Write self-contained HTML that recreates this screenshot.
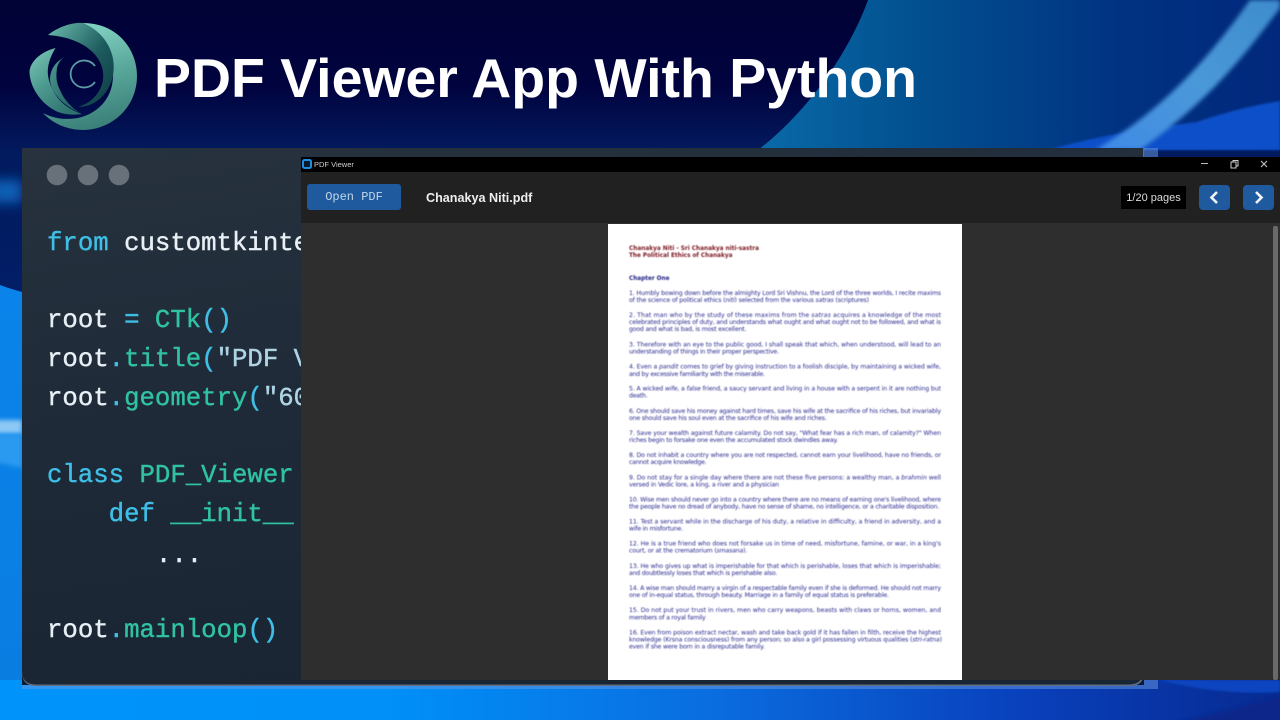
<!DOCTYPE html>
<html><head><meta charset="utf-8"><style>
html,body{margin:0;padding:0;width:1280px;height:720px;overflow:hidden;background:#021a5e}
.abs{position:absolute}
#code{left:47px;top:0;font-family:"Liberation Mono",monospace;font-size:25.7px;color:#e8f0f6;white-space:pre;position:absolute;-webkit-text-stroke:.4px currentColor}
#code div{position:absolute;left:0;line-height:30px;height:30px}
.k{color:#3fbfe6}.g{color:#30c2a2}.s{color:#aed4e4}
text{font-family:"DejaVu Sans",sans-serif}
</style></head><body>
<svg class="abs" style="left:0;top:0" width="1280" height="720" viewBox="0 0 1280 720">
<defs>
<linearGradient id="bg" x1="0" y1="0" x2="0" y2="1"><stop offset="0" stop-color="#010235"/><stop offset=".12" stop-color="#01033f"/><stop offset=".21" stop-color="#021a5e"/><stop offset="1" stop-color="#022a80"/></linearGradient>
<linearGradient id="sw" x1="0" y1="0" x2="1" y2="0"><stop offset="0" stop-color="#0a6aa8"/><stop offset=".3" stop-color="#02508f"/><stop offset=".7" stop-color="#013282"/><stop offset="1" stop-color="#01287c"/></linearGradient>
<linearGradient id="bot" x1="0" y1="0" x2="1" y2="0"><stop offset="0" stop-color="#0094fa"/><stop offset=".3" stop-color="#0090f8"/><stop offset=".55" stop-color="#0a6ee0"/><stop offset=".8" stop-color="#0940bc"/><stop offset="1" stop-color="#072a90"/></linearGradient>
<linearGradient id="st" x1="0" y1="1" x2="1" y2="0"><stop offset="0" stop-color="#3f8ae6"/><stop offset=".5" stop-color="#4a98d8"/><stop offset="1" stop-color="#3e8ccc"/></linearGradient>
<linearGradient id="lf" x1="0" y1="0" x2="0" y2="1"><stop offset="0" stop-color="#0a84ea"/><stop offset="1" stop-color="#0a7ce0"/></linearGradient>
<linearGradient id="lg1" x1=".3" y1="0" x2=".5" y2="1"><stop offset="0" stop-color="#86d6c6"/><stop offset=".5" stop-color="#5aa89c"/><stop offset="1" stop-color="#3a7f78"/></linearGradient>
<linearGradient id="lg2" x1="0" y1="0" x2=".7" y2="1"><stop offset="0" stop-color="#7cc8b8"/><stop offset=".5" stop-color="#4d9a90"/><stop offset="1" stop-color="#2f726e"/></linearGradient>
<linearGradient id="lg3" x1="0" y1="0" x2="1" y2="1"><stop offset="0" stop-color="#4f9a90"/><stop offset="1" stop-color="#17555a"/></linearGradient>
<linearGradient id="lg4" x1="0" y1="0" x2="1" y2="1"><stop offset="0" stop-color="#6cbcae"/><stop offset=".55" stop-color="#1d5c5e"/><stop offset="1" stop-color="#0c3a44"/></linearGradient>
<linearGradient id="panel" x1="0" y1="0" x2=".3" y2="1"><stop offset="0" stop-color="#27323e"/><stop offset=".5" stop-color="#1e2a38"/><stop offset="1" stop-color="#1a2534"/></linearGradient>
<filter id="b3" x="-30%" y="-30%" width="160%" height="160%"><feGaussianBlur stdDeviation="2"/></filter>
<filter id="b6" x="-50%" y="-50%" width="200%" height="200%"><feGaussianBlur stdDeviation="6"/></filter>
<filter id="b1" x="-30%" y="-30%" width="160%" height="160%"><feGaussianBlur stdDeviation="1"/></filter>
</defs>
<rect width="1280" height="720" fill="url(#bg)"/>
<!-- top right swoosh -->
<path d="M868 0 C850 50 810 110 758 150 L1280 150 L1280 0 Z" fill="url(#sw)"/>
<path d="M1048 150 C1100 135 1150 128 1197 122 C1225 112 1255 105 1280 101 L1280 150 Z" fill="#0b50c8" filter="url(#b1)"/>
<path d="M1095 150 C1160 112 1208 60 1250 0 L1280 0 L1280 8 C1245 55 1210 100 1140 150 Z" fill="url(#st)" filter="url(#b3)"/>
<!-- left strip -->
<path d="M-10 180 H22 V203 H-10 Z" fill="#0a60b8" filter="url(#b6)"/>
<path d="M0 285 C8 288 15 290 22 292 V720 H0 Z" fill="url(#lf)"/>
<path d="M-5 420 H22 V434 H-5 Z" fill="#8cc8f4" filter="url(#b3)"/>
<path d="M-5 434 H22 V468 L-5 462 Z" fill="#2a9af0" filter="url(#b3)"/>
<!-- bottom -->
<rect x="0" y="680" width="1280" height="40" fill="url(#bot)"/>
<path d="M1158 680 L1280 680 L1280 692 C1240 695 1200 690 1158 680 Z" fill="#0a44c0" filter="url(#b1)"/>
<path d="M1170 725 L1290 695 L1290 725 Z" fill="#07268a" filter="url(#b3)"/>
<!-- translucent backing -->
<rect x="22" y="148" width="1136" height="541" fill="#6a9ae0" opacity=".5"/>
<rect x="22" y="148" width="1122" height="537" fill="#0a1a30"/>
<path d="M22 148 H1144 V672 Q1144 686 1130 686 H36 Q22 686 22 672 Z" fill="#5f6e84"/>
<path d="M22 148 H1143 V671 Q1143 684.500 1129 684.500 H36 Q22 684.500 22 671 Z" fill="url(#panel)"/>
<!-- dots -->
<circle cx="57" cy="175" r="10.300" fill="#687079"/><circle cx="88" cy="175" r="10.300" fill="#687079"/><circle cx="119" cy="175" r="10.300" fill="#687079"/>
<!-- logo -->
<path d="M83 23 C118 23 137 50 137 76 C137 107 112 130 83 130 C68 130 53 124 43 113 C55 119 65 120 78 118 C96 114 113 100 113 75 C113 50 95 30 83 23 Z" fill="url(#lg1)"/>
<path d="M48 35 C58 27 72 22 83 23 C105 32 119 55 112 80 C106 98 92 107 78 107 C92 103 101 92 103 80 C106 60 88 38 48 35 Z" fill="url(#lg4)"/>
<path d="M55.500 48 C40 52 30 62 29.500 72 C30 90 44 106 58 112 C66 115 75 115 82 114 C70 110 60 103 54 92 C49 83 47 75 48 68 C49 60 52 54 55.500 48 Z" fill="url(#lg2)"/>
<path d="M64 57.500 C55 62 50 70 50 80 C51 92 62 105 80 113 C72 108 64 100 60 90 C56 82 56 76 57 68 C58 64 60 60 64 57.500 Z" fill="url(#lg3)"/>
<path d="M95 66 A13.500 13.500 0 1 0 95 82" fill="none" stroke="#5c9ca6" stroke-width="1.800"/>
<!-- title -->
<text x="154" y="97" textLength="763" lengthAdjust="spacingAndGlyphs" style="font-family:'Liberation Sans',sans-serif;font-weight:700;font-size:54.500px" fill="#fff">PDF Viewer App With Python</text>
</svg>

<div id="code">
<div style="top:229px"><span class="k">from</span> customtkinte</div>
<div style="top:306px">root <span class="k">=</span> <span class="g">CTk</span><span class="k">()</span></div>
<div style="top:345px">root<span class="k">.</span><span class="g">title</span><span class="k">(</span><span class="s">"PDF V</span></div>
<div style="top:384px">root<span class="k">.</span><span class="g">geometry</span><span class="k">(</span><span class="s">"60</span></div>
<div style="top:461px"><span class="k">class</span> <span class="g">PDF_Viewer</span></div>
<div style="top:500px">    <span class="k">def</span> <span class="g">__init__</span></div>
<div style="top:541px;left:1px">       ...</div>
<div style="top:616px">root<span class="k">.</span><span class="g">mainloop</span><span class="k">()</span></div>
</div>

<!-- PDF window -->
<div class="abs" style="left:301px;top:157px;width:979px;height:15px;background:#000"></div>
<div class="abs" style="left:301px;top:172px;width:979px;height:51px;background:#212121"></div>
<div class="abs" style="left:301px;top:223px;width:979px;height:457px;background:#2e2e2e"></div>
<div class="abs" style="left:302px;top:159px;width:5.500px;height:5.500px;border:2.500px solid #1e8fe0;border-radius:2.500px;background:#0a1a2a"></div>
<div class="abs" style="left:314px;top:158px;font:7.500px/13px 'Liberation Sans',sans-serif;color:#d0d0d0">PDF Viewer</div>
<svg class="abs" style="left:1195px;top:157px" width="85" height="15" viewBox="0 0 85 15">
<path d="M6 6.500H13" stroke="#bbb" stroke-width="1"/>
<rect x="36" y="5" width="5" height="6" fill="none" stroke="#ccc" stroke-width="1"/><path d="M38 5V3.500H43V9H41" fill="none" stroke="#ccc" stroke-width="1"/>
<path d="M66 4L72 10M72 4L66 10" stroke="#ccc" stroke-width="1"/>
</svg>
<div class="abs" style="left:307px;top:184px;width:94px;height:26px;background:#1f5a9e;border-radius:3px;font:12px/26px 'Liberation Mono',monospace;color:#c0d6ea;text-align:center">Open PDF</div>
<div class="abs" style="left:426px;top:190px;font:bold 12.600px/17px 'Liberation Sans',sans-serif;color:#eee;width:120px;white-space:nowrap">Chanakya Niti.pdf</div>
<div class="abs" style="left:1121px;top:186px;width:65px;height:23px;background:#000;font:11px/24px 'Liberation Sans',sans-serif;color:#ddd;text-align:center;white-space:nowrap">1/20 pages</div>
<div class="abs" style="left:1199px;top:185px;width:31px;height:25px;background:#1f5a9e;border-radius:4px"></div>
<div class="abs" style="left:1243px;top:185px;width:31px;height:25px;background:#1f5a9e;border-radius:4px"></div>
<svg class="abs" style="left:1199px;top:185px" width="75" height="25" viewBox="0 0 75 25">
<path d="M18 7L12.500 12.500L18 18" fill="none" stroke="#f2f6fa" stroke-width="2.600"/>
<path d="M57 7L62.500 12.500L57 18" fill="none" stroke="#f2f6fa" stroke-width="2.600"/>
</svg>
<div class="abs" style="left:1273px;top:226px;width:5px;height:454px;background:#6a6a6a;border-radius:2px"></div>
<div class="abs" style="left:608px;top:224px;width:354px;height:456px;background:#fff"></div>

<svg class="abs" style="left:0;top:0;filter:blur(.4px)" width="1280" height="720" viewBox="0 0 1280 720">
<g font-size="6.300" fill="#7a1520" font-weight="bold">
<text x="629" y="250" textLength="130" lengthAdjust="spacingAndGlyphs">Chanakya Niti - Sri Chanakya niti-sastra</text>
<text x="629" y="257" textLength="103.500" lengthAdjust="spacingAndGlyphs">The Political Ethics of Chanakya</text>
</g>
<text x="629" y="280" textLength="40.500" lengthAdjust="spacingAndGlyphs" font-size="6.300" font-weight="bold" fill="#1c1c80">Chapter One</text>
<g font-size="6.200" fill="#2a2a90">
<text x="629" y="295" textLength="312">1. Humbly bowing down before the almighty Lord Sri Vishnu, the Lord of the three worlds, I recite maxims</text>
<text x="629" y="302" textLength="240">of the science of political ethics (<tspan font-style="italic">niti</tspan>) selected from the various <tspan font-style="italic">satras</tspan> (scriptures)</text>
<text x="629" y="317" textLength="312">2. That man who by the study of these maxims from the <tspan font-style="italic">satras</tspan> acquires a knowledge of the most</text>
<text x="629" y="324" textLength="312">celebrated principles of duty, and understands what ought and what ought not to be followed, and what is</text>
<text x="629" y="331" textLength="117.500">good and what is bad, is most excellent.</text>
<text x="629" y="346.500" textLength="312">3. Therefore with an eye to the public good, I shall speak that which, when understood, will lead to an</text>
<text x="629" y="353.500" textLength="150">understanding of things in their proper perspective.</text>
<text x="629" y="368.500" textLength="312">4. Even a <tspan font-style="italic">pandit</tspan> comes to grief by giving instruction to a foolish disciple, by maintaining a wicked wife,</text>
<text x="629" y="376" textLength="136">and by excessive familiarity with the miserable.</text>
<text x="629" y="390.500" textLength="312">5. A wicked <tspan font-style="italic">wife</tspan>, a <tspan font-style="italic">false</tspan> friend, a saucy servant and living in a house with a serpent in it are nothing but</text>
<text x="629" y="397.500" textLength="18.700">death.</text>
<text x="629" y="413" textLength="312">6. One should save his money against hard times, save his wife at the sacrifice of his riches, but invariably</text>
<text x="629" y="420" textLength="197.700">one should save his soul even at the sacrifice of his wife and riches.</text>
<text x="629" y="435" textLength="312">7. Save your wealth against future calamity. Do not say, "What fear has a rich man, of calamity?" When</text>
<text x="629" y="442" textLength="209">riches begin to forsake one even the accumulated stock dwindles away.</text>
<text x="629" y="457" textLength="312">8. Do not inhabit a country where you are not respected, cannot earn your livelihood, have no friends, or</text>
<text x="629" y="464" textLength="77.700">cannot acquire knowledge.</text>
<text x="629" y="479.500" textLength="312">9. Do not stay for a single day where there are not these five persons: a wealthy man, a <tspan font-style="italic">brahmin</tspan> well</text>
<text x="629" y="486.500" textLength="150">versed in Vedic lore, a king, a river and a physician</text>
<text x="629" y="501.500" textLength="312">10. Wise men should never go into a country where there are no means of earning one's livelihood, where</text>
<text x="629" y="508.500" textLength="310.300">the people have no dread of anybody, have no sense of shame, no intelligence, or a charitable disposition.</text>
<text x="629" y="523.500" textLength="312">11. Test a servant while in the discharge of his duty, a relative in difficulty, a friend in adversity, and a</text>
<text x="629" y="530.500" textLength="54">wife in misfortune.</text>
<text x="629" y="545.500" textLength="312">12. He is a true friend who does not forsake us in time of need, misfortune, famine, or war, in a king's</text>
<text x="629" y="552.500" textLength="118.300">court, or at the crematorium (<tspan font-style="italic">smasana</tspan>).</text>
<text x="629" y="568" textLength="312">13. He who gives up what is imperishable for that which is perishable, loses that which is imperishable;</text>
<text x="629" y="575" textLength="148.300">and doubtlessly loses that which is perishable also.</text>
<text x="629" y="590" textLength="312">14. A wise man should marry a virgin of a respectable family even if she is deformed. He should not marry</text>
<text x="629" y="597" textLength="260">one of in-equal status, through beauty. Marriage in a family of equal status is preferable.</text>
<text x="629" y="612" textLength="312">15. Do not put your trust in rivers, men who carry weapons, beasts with claws or horns, women, and</text>
<text x="629" y="619.500" textLength="76.700">members of a royal family</text>
<text x="629" y="634.500" textLength="312">16. Even from poison extract nectar, wash and take back gold if it has fallen in filth, receive the highest</text>
<text x="629" y="641.500" textLength="313">knowledge (Krsna consciousness) from any person; so also a girl possessing virtuous qualities (<tspan font-style="italic">stri-ratna</tspan>)</text>
<text x="629" y="648.500" textLength="135.700">even if she were born in a disreputable family.</text>
</g>
</svg>
</body></html>
